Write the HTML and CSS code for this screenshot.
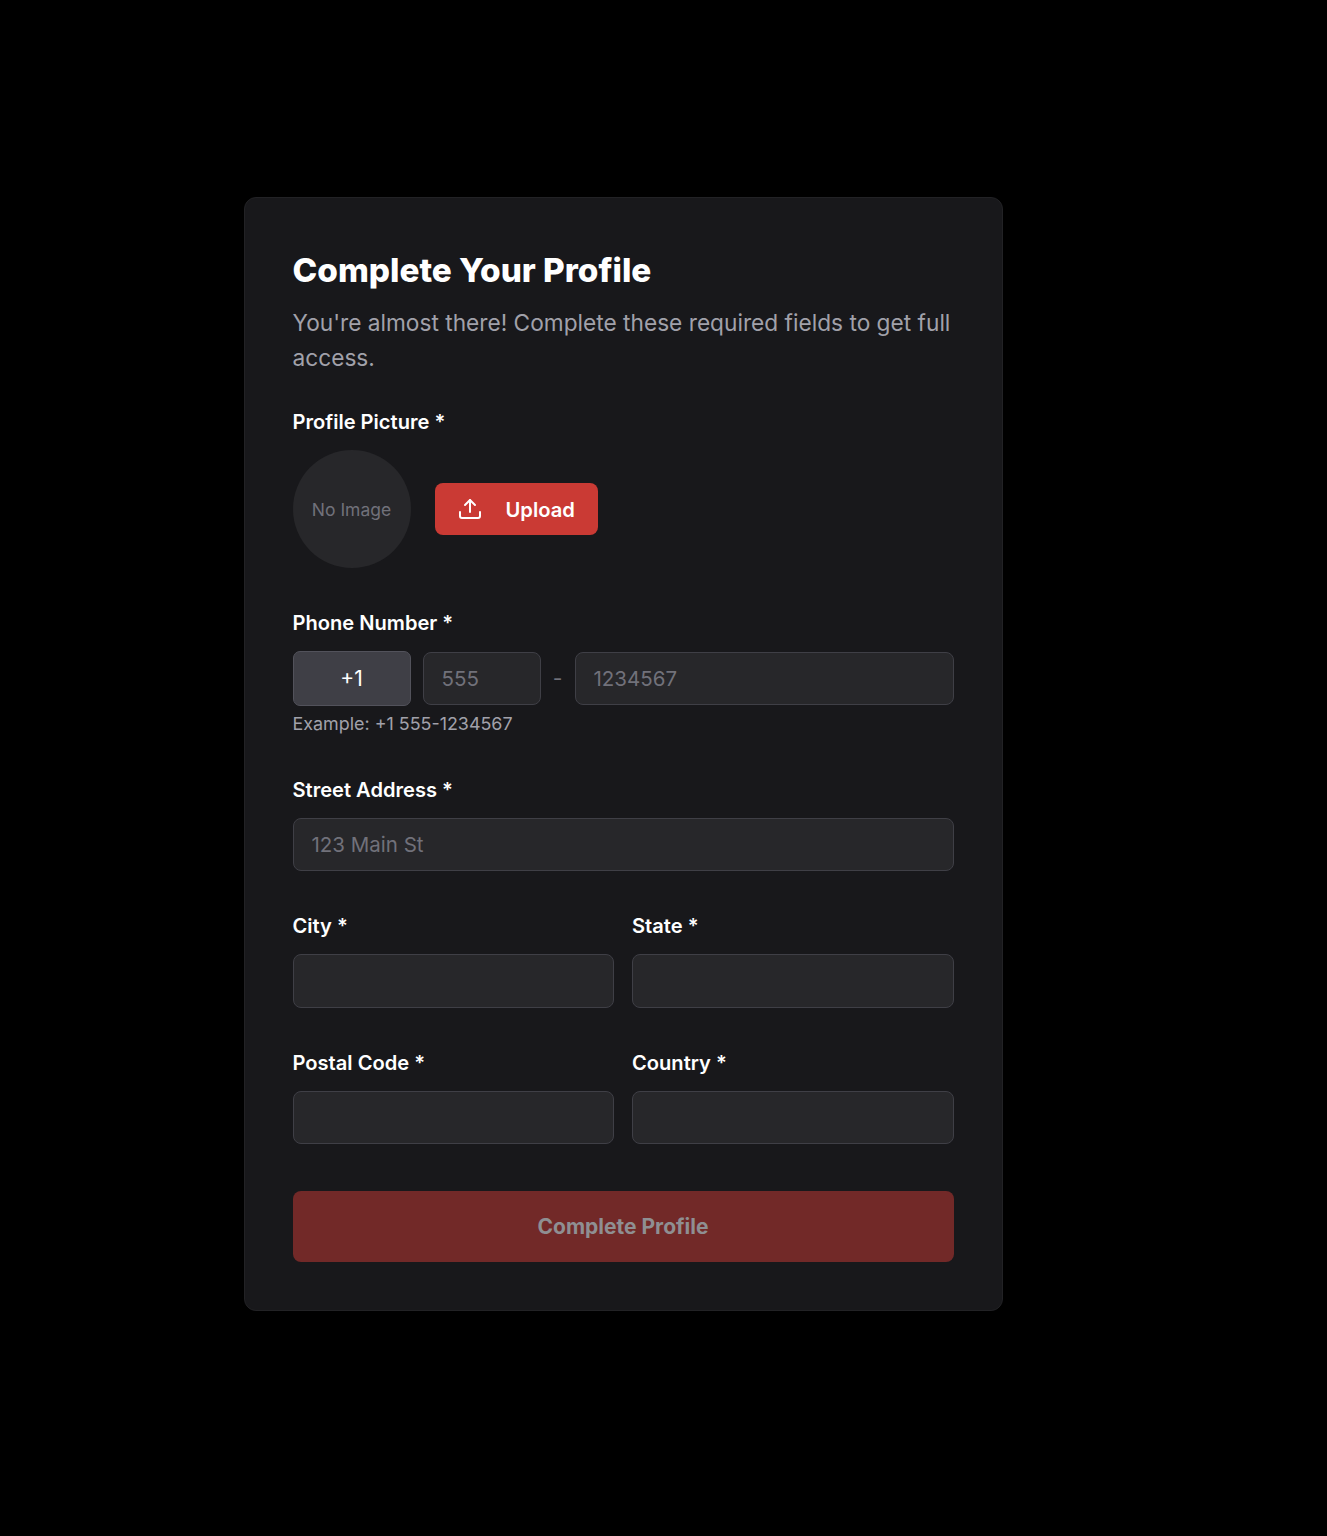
FILE: index.html
```html
<!DOCTYPE html>
<html lang="en">
<head>
    <meta charset="UTF-8">
    <meta name="viewport" content="width=device-width, initial-scale=1.0">
    <title>Complete Your Profile</title>
    <link rel="stylesheet" href="styles.css">
</head>
<body>
    <div class="card">
        <h1>Complete Your Profile</h1>
        <p class="subtitle">You're almost there! Complete these required fields to get full access.</p>

        <form class="profile-form">
            <div class="field">
                <label>Profile Picture *</label>
                <div class="avatar-row">
                    <div class="avatar">No Image</div>
                    <button type="button" class="upload-btn">
                        <svg width="24" height="24" viewBox="0 0 24 24" fill="none" stroke="currentColor" stroke-width="2" stroke-linecap="round" stroke-linejoin="round">
                            <path d="M12 15V3"/>
                            <path d="M7 8l5-5 5 5"/>
                            <path d="M2 15v4a2 2 0 0 0 2 2h16a2 2 0 0 0 2-2v-4"/>
                        </svg>
                        <span>Upload</span>
                    </button>
                </div>
            </div>

            <div class="field">
                <label>Phone Number *</label>
                <div class="phone-row">
                    <button type="button" class="code-btn">+1</button>
                    <input class="input area" type="text" placeholder="555">
                    <span class="dash">-</span>
                    <input class="input number" type="text" placeholder="1234567">
                </div>
                <p class="hint">Example: +1 555-1234567</p>
            </div>

            <div class="field">
                <label>Street Address *</label>
                <input class="input" type="text" placeholder="123 Main St">
            </div>

            <div class="two-col">
                <div class="field">
                    <label>City *</label>
                    <input class="input" type="text">
                </div>
                <div class="field">
                    <label>State *</label>
                    <input class="input" type="text">
                </div>
            </div>

            <div class="two-col">
                <div class="field">
                    <label>Postal Code *</label>
                    <input class="input" type="text">
                </div>
                <div class="field">
                    <label>Country *</label>
                    <input class="input" type="text">
                </div>
            </div>

            <button type="button" class="submit-btn" disabled>Complete Profile</button>
        </form>
    </div>
</body>
</html>
```

FILE: styles.css
```css
* {
    margin: 0;
    padding: 0;
    box-sizing: border-box;
}

body {
    font-family: 'Inter', sans-serif;
    background: #000;
    min-height: 100vh;
    padding: 197px 81px 0 0;
    color: #fff;
}

.card {
    width: 759px;
    margin: 0 auto;
    padding: 48px;
    background: #18181b;
    border: 1px solid #222225;
    border-radius: 12px;
}

h1 {
    font-size: 33.3px;
    line-height: 47px;
    font-weight: 800;
    margin-top: 1px;
    margin-bottom: 11px;
}

.subtitle {
    font-size: 22.7px;
    line-height: 35px;
    color: #a1a1aa;
    margin-bottom: 35px;
}

.profile-form {
    display: flex;
    flex-direction: column;
    gap: 43px;
}

.field {
    display: flex;
    flex-direction: column;
}

label {
    font-size: 20.1px;
    line-height: 24px;
    font-weight: 600;
    margin-bottom: 16px;
}

.avatar-row {
    display: flex;
    align-items: center;
    gap: 24px;
}

.avatar {
    width: 118px;
    height: 118px;
    border-radius: 50%;
    background: #27272a;
    color: #71717a;
    font-size: 17.5px;
    display: flex;
    align-items: center;
    justify-content: center;
}

.upload-btn {
    display: flex;
    align-items: center;
    gap: 24px;
    height: 52px;
    padding: 0 23px;
    background: #ca3a34;
    color: #fff;
    border: none;
    border-radius: 8px;
    font-family: inherit;
    font-size: 20.2px;
    font-weight: 600;
}

.phone-row {
    display: flex;
    align-items: center;
}

.code-btn {
    width: 118px;
    height: 55px;
    background: #3f3f46;
    color: #fff;
    border: 1px solid #52525b;
    border-radius: 7px;
    font-family: inherit;
    font-size: 21px;
    margin-right: 12px;
}

.input {
    width: 100%;
    height: 53.3px;
    padding: 0 18px;
    background: #27272a;
    border: 1px solid #3f3f46;
    border-radius: 8px;
    color: #fff;
    font-family: inherit;
    font-size: 20.5px;
}

.input::placeholder {
    color: #71717a;
}

.area {
    width: 118px;
}

.number {
    flex: 1;
    min-width: 0;
}

.dash {
    width: 34px;
    text-align: center;
    color: #71717a;
    font-size: 21px;
}

.hint {
    font-size: 17.9px;
    line-height: 23px;
    color: #a1a1aa;
    margin-top: 6px;
}

.two-col {
    display: grid;
    grid-template-columns: 1fr 1fr;
    gap: 18px;
}

.submit-btn {
    height: 71px;
    margin-top: 4px;
    background: #722928;
    color: #8f8f92;
    border: none;
    border-radius: 8px;
    font-family: inherit;
    font-size: 21px;
    font-weight: 700;
}
```
